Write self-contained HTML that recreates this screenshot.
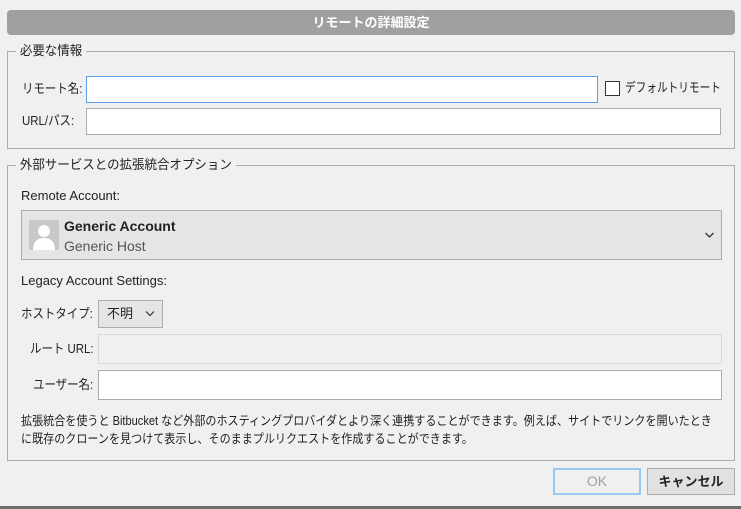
<!DOCTYPE html>
<html><head><meta charset="utf-8"><style>
*{box-sizing:border-box;margin:0;padding:0}
body{width:741px;height:509px;background:#f0f0f0;position:relative;overflow:hidden;font-family:"Liberation Sans","Noto Sans CJK JP",sans-serif;font-size:13px;color:#222}
.a{position:absolute;white-space:nowrap}
.n{transform:scaleX(0.88);transform-origin:0 0}
.title{left:7px;top:10px;width:728px;height:25px;background:#a0a0a0;border-radius:4px;color:#fff;font-weight:bold;text-align:center;line-height:25px;font-size:13px}
.grp{border:1px solid #acacac}
.leg{background:#f0f0f0;padding:0 4px;font-size:13px;line-height:16px;transform:scaleX(0.96);transform-origin:0 0}
.inp{background:#fff;border:1px solid #acacac}
.lbl{line-height:16px}
</style></head><body>
<div class="a title">リモートの詳細設定</div>

<div class="a grp" style="left:7px;top:51px;width:728px;height:98px"></div>
<div class="a leg" style="left:16px;top:43px">必要な情報</div>
<div class="a lbl n" style="left:22px;top:81px">リモート名:</div>
<div class="a inp" style="left:86px;top:76px;width:512px;height:27px;border-color:#5a9ee6"></div>
<div class="a" style="left:605px;top:81px;width:15px;height:15px;border:1px solid #333;background:#fff"></div>
<div class="a lbl" style="left:625px;top:80px;transform:scaleX(0.82);transform-origin:0 0">デフォルトリモート</div>
<div class="a lbl n" style="left:22px;top:113px">URL/パス:</div>
<div class="a inp" style="left:86px;top:108px;width:635px;height:27px"></div>

<div class="a grp" style="left:7px;top:165px;width:728px;height:296px"></div>
<div class="a leg" style="left:16px;top:157px">外部サービスとの拡張統合オプション</div>
<div class="a lbl" style="left:21px;top:188px">Remote Account:</div>
<div class="a" style="left:21px;top:210px;width:701px;height:50px;background:#e5e5e5;border:1px solid #adadad"></div>
<div class="a" style="left:29px;top:220px;width:30px;height:30px;background:#c8c8c8;overflow:hidden">
<svg width="30" height="30"><circle cx="15" cy="11" r="6" fill="#fff"/><path d="M4 30 Q4 18 15 18 Q26 18 26 30Z" fill="#fff"/></svg></div>
<div class="a" style="left:64px;top:217px;font-weight:bold;font-size:14px;line-height:18px">Generic Account</div>
<div class="a" style="left:64px;top:237px;font-size:14px;line-height:18px;color:#555">Generic Host</div>
<svg class="a" style="left:704px;top:231px" width="11" height="8"><path d="M1.5 2 L5.5 6 L9.5 2" stroke="#333" stroke-width="1.3" fill="none"/></svg>
<div class="a lbl" style="left:21px;top:273px">Legacy Account Settings:</div>
<div class="a lbl n" style="left:21px;top:306px">ホストタイプ:</div>
<div class="a" style="left:98px;top:300px;width:65px;height:28px;background:#e5e5e5;border:1px solid #adadad"></div>
<div class="a lbl" style="left:107px;top:306px">不明</div>
<svg class="a" style="left:145px;top:310px" width="10" height="7"><path d="M1 1.5 L5 5.5 L9 1.5" stroke="#333" stroke-width="1.2" fill="none"/></svg>
<div class="a lbl n" style="left:30px;top:341px">ルート URL:</div>
<div class="a" style="left:98px;top:334px;width:624px;height:30px;background:#f0f0f0;border:1px solid #d9d9d9"></div>
<div class="a lbl n" style="left:33px;top:377px">ユーザー名:</div>
<div class="a inp" style="left:98px;top:370px;width:624px;height:30px"></div>
<div class="a" style="left:21px;top:412px;font-size:12.5px;line-height:18px;transform:scaleX(0.885);transform-origin:0 0">拡張統合を使うと Bitbucket など外部のホスティングプロバイダとより深く連携することができます。例えば、サイトでリンクを開いたとき<br>に既存のクローンを見つけて表示し、そのままプルリクエストを作成することができます。</div>

<div class="a" style="left:553px;top:468px;width:88px;height:27px;border:2px solid #99c8f0;background:#f0f0f0;color:#a0a0a0;text-align:center;line-height:23px;font-size:14px">OK</div>
<div class="a" style="left:647px;top:468px;width:88px;height:27px;border:1px solid #adadad;background:#e1e1e1;text-align:center;line-height:25px;font-weight:bold;font-size:13px">キャンセル</div>
<div class="a" style="left:0;top:506px;width:741px;height:3px;background:#6e6e6e"></div>
</body></html>
